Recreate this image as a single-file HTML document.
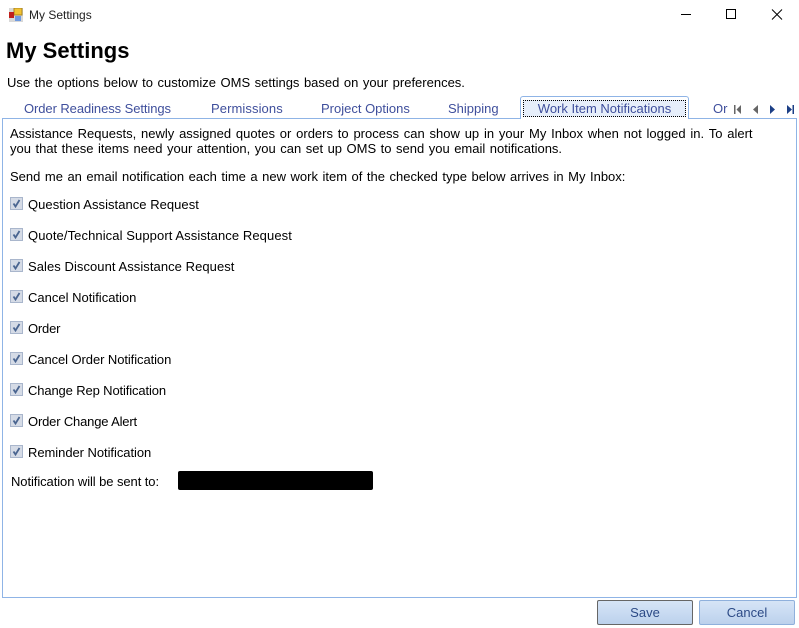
<!DOCTYPE html>
<html><head><meta charset="utf-8">
<style>
html,body{margin:0;padding:0;background:#fff}
body{width:799px;height:628px;position:relative;overflow:hidden;font-family:"Liberation Sans",sans-serif;font-size:13px;color:#000}
.t{position:absolute;white-space:nowrap;line-height:14px}
.tab{color:#3f4f9c}
.c{position:absolute;left:10px;width:11px;height:11px;border:1px solid #a9b6cc;background:#d5dbe6}
.c svg{position:absolute;left:1px;top:1px}
.b{position:absolute;top:600px;height:25px;box-sizing:border-box;border:1px solid #8fb0dc;background:linear-gradient(#d6e4f6,#c9dbf2 50%,#bcd1ec);color:#2c4a86;text-align:center;line-height:23px;border-radius:2px}
</style></head><body>
<svg style="position:absolute;left:9px;top:8px" width="14" height="14"><rect x="0" y="0" width="14" height="14" fill="#d8d8d8"/><rect x="5" y="0" width="8" height="7" fill="#f2c230" stroke="#a98420"/><rect x="0" y="4" width="5" height="6" fill="#c0201c"/><rect x="6" y="8" width="6" height="5" fill="#6f9ae0"/></svg>
<div class="t" style="left:29px;top:8px;color:#222;font-size:12px">My Settings</div>
<svg style="position:absolute;left:680px;top:8px" width="110" height="14" fill="none" stroke="#000"><path d="M1 6.500H11"/><rect x="46.500" y="1.500" width="9" height="9"/><path d="M92 1.500L102 11.500M102 1.500L92 11.500"/></svg>
<div class="t" style="left:6px;top:39px;font-size:22px;font-weight:bold;line-height:24px">My Settings</div>
<div class="t" style="left:7px;top:76px;word-spacing:.9px">Use the options below to customize OMS settings based on your preferences.</div>
<div class="t tab" style="left:24px;top:102px;letter-spacing:-.08px">Order Readiness Settings</div>
<div class="t tab" style="left:211px;top:102px;letter-spacing:.09px">Permissions</div>
<div class="t tab" style="left:321px;top:102px">Project Options</div>
<div class="t tab" style="left:448px;top:102px">Shipping</div>
<div style="position:absolute;left:2px;top:118px;width:793px;height:478px;border:1px solid #8fb4e6;background:#fff"></div>
<div style="position:absolute;left:520px;top:96px;width:169px;height:23px;box-sizing:border-box;border:1px solid #8fb4e6;border-bottom:none;border-radius:3px 3px 0 0;background:#fff;padding:3px 2px 0"><div style="height:17px;box-sizing:border-box;border:1px dotted #000;background:#e6eefa;color:#3f4f9c;text-align:center;line-height:16px">Work Item Notifications</div></div>
<div class="t tab" style="left:713px;top:102px;width:15px;overflow:hidden">Order</div>
<svg style="position:absolute;left:733px;top:104px" width="62" height="12"><path d="M1 1V10H2.500V1ZM8 1L3.500 5.500L8 10Z" fill="#666"/><path d="M25 1L20 5.500L25 10Z" fill="#666"/><path d="M37 1L42 5.500L37 10Z" fill="#1c3f86"/><path d="M54 1L59 5.500L54 10ZM59.500 1V10H61V1Z" fill="#1c3f86"/></svg>
<div class="t" style="left:10px;top:127px;word-spacing:1.2px">Assistance Requests, newly assigned quotes or orders to process can show up in your My Inbox when not logged in. To alert</div>
<div class="t" style="left:10px;top:142px;word-spacing:.9px">you that these items need your attention, you can set up OMS to send you email notifications.</div>
<div class="t" style="left:10px;top:170px;word-spacing:.9px">Send me an email notification each time a new work item of the checked type below arrives in My Inbox:</div>

<div class="c" style="top:197px"><svg width="9" height="9"><path d="M1.500 4.500L3.500 7.500L7.500 1" fill="none" stroke="#4a6590" stroke-width="1.800"/></svg></div>
<div class="t" style="left:28px;top:198px;letter-spacing:.04px">Question Assistance Request</div>
<div class="c" style="top:228px"><svg width="9" height="9"><path d="M1.500 4.500L3.500 7.500L7.500 1" fill="none" stroke="#4a6590" stroke-width="1.800"/></svg></div>
<div class="t" style="left:28px;top:229px;letter-spacing:.09px">Quote/Technical Support Assistance Request</div>
<div class="c" style="top:259px"><svg width="9" height="9"><path d="M1.500 4.500L3.500 7.500L7.500 1" fill="none" stroke="#4a6590" stroke-width="1.800"/></svg></div>
<div class="t" style="left:28px;top:260px;letter-spacing:.06px">Sales Discount Assistance Request</div>
<div class="c" style="top:290px"><svg width="9" height="9"><path d="M1.500 4.500L3.500 7.500L7.500 1" fill="none" stroke="#4a6590" stroke-width="1.800"/></svg></div>
<div class="t" style="left:28px;top:291px">Cancel Notification</div>
<div class="c" style="top:321px"><svg width="9" height="9"><path d="M1.500 4.500L3.500 7.500L7.500 1" fill="none" stroke="#4a6590" stroke-width="1.800"/></svg></div>
<div class="t" style="left:28px;top:322px;letter-spacing:-.2px">Order</div>
<div class="c" style="top:352px"><svg width="9" height="9"><path d="M1.500 4.500L3.500 7.500L7.500 1" fill="none" stroke="#4a6590" stroke-width="1.800"/></svg></div>
<div class="t" style="left:28px;top:353px;letter-spacing:-.08px">Cancel Order Notification</div>
<div class="c" style="top:383px"><svg width="9" height="9"><path d="M1.500 4.500L3.500 7.500L7.500 1" fill="none" stroke="#4a6590" stroke-width="1.800"/></svg></div>
<div class="t" style="left:28px;top:384px;letter-spacing:-.13px">Change Rep Notification</div>
<div class="c" style="top:414px"><svg width="9" height="9"><path d="M1.500 4.500L3.500 7.500L7.500 1" fill="none" stroke="#4a6590" stroke-width="1.800"/></svg></div>
<div class="t" style="left:28px;top:415px;letter-spacing:-.17px">Order Change Alert</div>
<div class="c" style="top:445px"><svg width="9" height="9"><path d="M1.500 4.500L3.500 7.500L7.500 1" fill="none" stroke="#4a6590" stroke-width="1.800"/></svg></div>
<div class="t" style="left:28px;top:446px;letter-spacing:-.05px">Reminder Notification</div>

<div class="t" style="left:11px;top:475px;letter-spacing:-.08px">Notification will be sent to:</div>
<div style="position:absolute;left:178px;top:471px;width:195px;height:19px;background:#000;border-radius:2px"></div>
<div class="b" style="left:597px;width:96px;border-color:#666">Save</div>
<div class="b" style="left:699px;width:96px">Cancel</div>
</body></html>
